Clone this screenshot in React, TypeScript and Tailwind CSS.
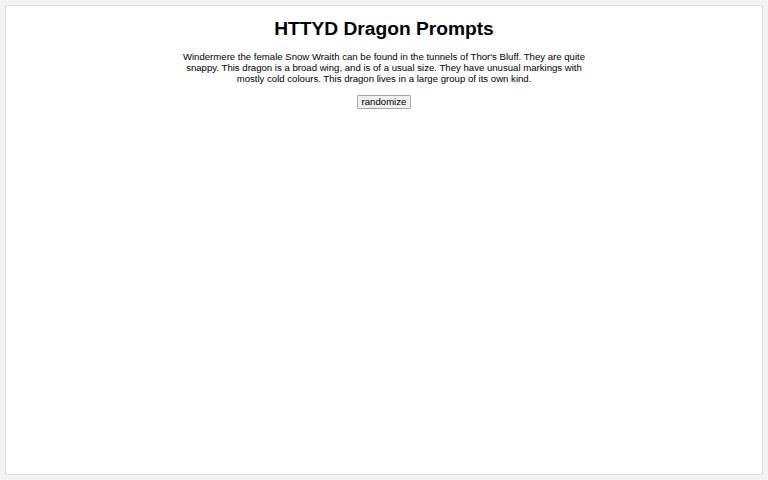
import React, { useState } from 'react'

const names = ['Windermere', 'Ashfall', 'Brightscale', 'Cinder']
const species = ['Snow Wraith', 'Nadder', 'Gronckle', 'Zippleback']

const App = () => {
    const [prompt, setPrompt] = useState(
        "Windermere the female Snow Wraith can be found in the tunnels of Thor's Bluff. They are quite snappy. This dragon is a broad wing, and is of a usual size. They have unusual markings with mostly cold colours. This dragon lives in a large group of its own kind."
    )

    const randomize = () => {
        const n = names[Math.floor(Math.random() * names.length)]
        const s = species[Math.floor(Math.random() * species.length)]
        setPrompt(`${n} the female ${s} can be found in the tunnels of Thor's Bluff. They are quite snappy.`)
    }

  return (
<div className="min-h-screen bg-[#f3f3f3] p-[5px] font-['Liberation_Sans',Arial,sans-serif] text-black">
  <div className="h-[470px] border border-[#dcdcdc] bg-white flex flex-col items-center pt-[12px]">
    <h1 className="text-[19.2px] leading-[22px] font-bold">HTTYD Dragon Prompts</h1>
    <p className="mt-[11px] w-[404px] text-center text-[9.6px] leading-[11px]">{prompt}</p>
    <button
      type="button"
      className="mt-[11px] px-[4px] h-[14px] leading-[12px] text-[9.6px] bg-[#efefef] border border-[#a6a6a6] rounded-[1px]"
      onClick={randomize}
    >randomize</button>
  </div>
</div>
  )
}

export default App
